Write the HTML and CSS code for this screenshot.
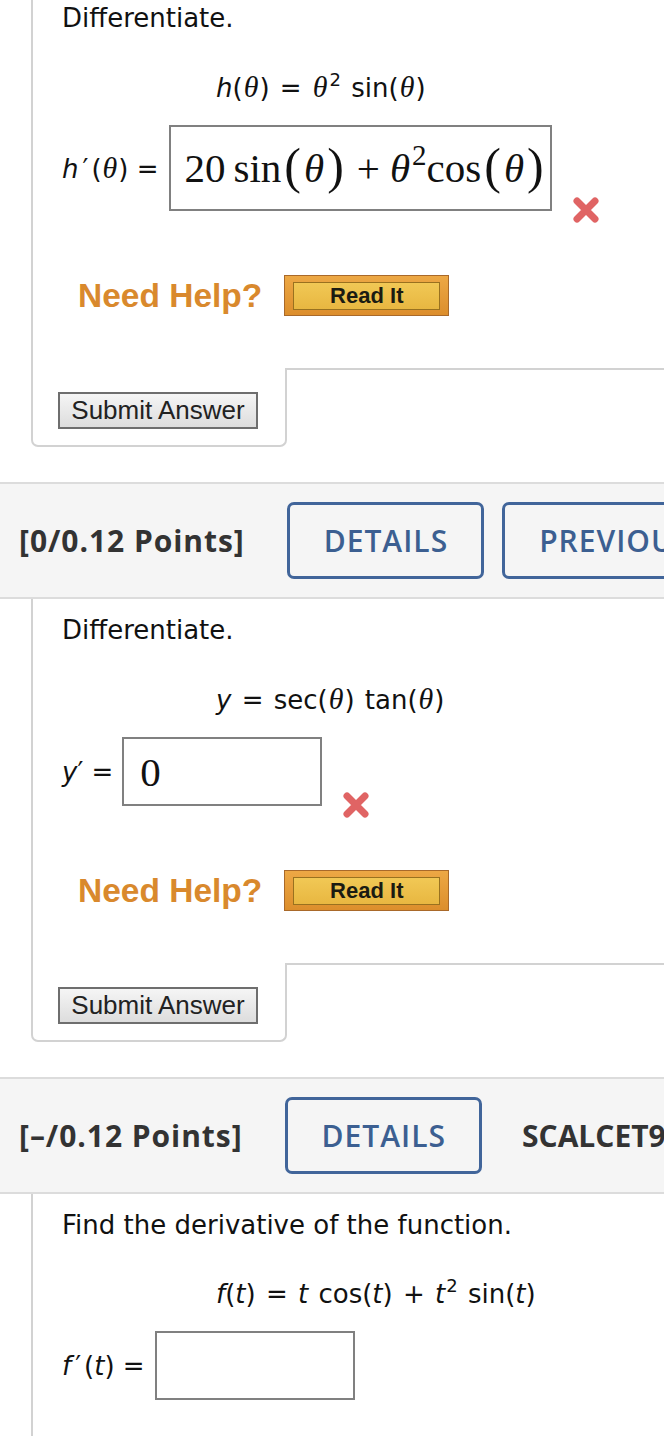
FILE: index.html
```html
<!DOCTYPE html>
<html>
<head>
<meta charset="utf-8">
<link rel="stylesheet" href="styles.css">
</head>
<body>
<div class="q q-first">
  <div class="q-body">
    <p class="prompt">Differentiate.</p>
    <p class="eq"><i>h</i>(<i class="th">θ</i>) = <i class="th">θ</i><sup>2</sup> sin(<i class="th">θ</i>)</p>
    <div class="ans-row">
      <span class="lbl"><i>h</i><span class="pr">′</span>(<i class="th">θ</i>) =</span>
      <div class="ans ans-wide"><span class="mj">20<span class="thin"></span>sin<span class="big">(</span><i>θ</i><span class="big">)</span><span class="op">+</span><i>θ</i><sup>2</sup>cos<span class="big">(</span><i>θ</i><span class="big">)</span></span></div>
      <svg class="xmark" width="30" height="28" viewBox="0 0 30 28"><path d="M6 5 L24 23 M24 5 L6 23" stroke="#e06464" stroke-width="7" stroke-linecap="round"/></svg>
    </div>
    <div class="help">
      <span class="need">Need Help?</span>
      <span class="readit"><span class="readit-in">Read It</span></span>
    </div>
  </div>
  <div class="tab"><button class="submit">Submit Answer</button></div>
</div>

<div class="band">
  <span class="pts">[0/0.12 Points]</span>
  <span class="btn">DETAILS</span>
  <span class="btn btn-next">PREVIOUS ANSWERS</span>
</div>

<div class="q">
  <div class="q-body">
    <p class="prompt">Differentiate.</p>
    <p class="eq"><i>y</i> = sec(<i class="th">θ</i>) tan(<i class="th">θ</i>)</p>
    <div class="ans-row">
      <span class="lbl lbl-y"><i>y</i>′ =</span>
      <div class="ans"><span class="mj">0</span></div>
      <svg class="xmark" width="30" height="28" viewBox="0 0 30 28"><path d="M6 5 L24 23 M24 5 L6 23" stroke="#e06464" stroke-width="7" stroke-linecap="round"/></svg>
    </div>
    <div class="help">
      <span class="need">Need Help?</span>
      <span class="readit"><span class="readit-in">Read It</span></span>
    </div>
  </div>
  <div class="tab"><button class="submit">Submit Answer</button></div>
</div>

<div class="band">
  <span class="pts">[–/0.12 Points]</span>
  <span class="btn">DETAILS</span>
  <span class="ref">SCALCET9 3.3.021.</span>
</div>

<div class="q q-last">
  <div class="q-body">
    <p class="prompt">Find the derivative of the function.</p>
    <p class="eq"><i>f</i>(<i>t</i>) = <i>t</i> cos(<i>t</i>) + <i>t</i><sup>2</sup> sin(<i>t</i>)</p>
    <div class="ans-row">
      <span class="lbl"><i>f</i><span class="pr">′</span>(<i>t</i>) =</span>
      <div class="ans ans-empty"></div>
    </div>
  </div>
</div>
</body>
</html>
```

FILE: styles.css
```css
html, body {
  margin: 0;
  padding: 0;
  background: #ffffff;
}
body {
  font-family: "DejaVu Sans", Verdana, sans-serif;
  color: #111111;
  overflow-x: hidden;
}
.q {
  margin-left: 31px;
}
.q-body {
  border-left: 2px solid #d2d2d2;
  border-bottom: 2px solid #d2d2d2;
  padding: 13px 0 52px 29px;
}
.q-first .q-body {
  padding-top: 0;
}
.q-last .q-body {
  border-bottom: none;
  padding-bottom: 60px;
}
.prompt {
  margin: 0;
  font-size: 26px;
  line-height: 36px;
}
.eq {
  margin: 33px 0 0 154px;
  font-size: 26px;
  line-height: 36px;
  white-space: nowrap;
  word-spacing: 2px;
}
.eq i, .lbl i {
  font-style: italic;
}
.th {
  font-family: "Liberation Serif", "Times New Roman", serif;
  font-size: 30px;
  padding: 0 1px;
}
.eq sup {
  font-size: 18px;
  line-height: 0;
  vertical-align: 11px;
  padding-left: 1px;
}
.ans-row {
  display: flex;
  align-items: center;
  margin-top: 19px;
}
.lbl {
  font-size: 26px;
  line-height: 36px;
  margin-right: 10px;
  white-space: nowrap;
}
.lbl-y {
  margin-right: 9px;
}
.pr {
  padding: 0 3px 0 4px;
}
.ans {
  box-sizing: border-box;
  width: 200px;
  min-height: 69px;
  border: 2px solid #808080;
  display: flex;
  align-items: center;
  padding: 0 16px;
  background: #ffffff;
}
.ans-wide {
  width: 383px;
  height: 86px;
  padding-left: 14px;
}
.mj {
  font-family: "Liberation Serif", "Times New Roman", serif;
  font-size: 41px;
  line-height: 50px;
  white-space: nowrap;
}
.mj i {
  font-style: italic;
}
.mj sup {
  font-size: 29px;
  line-height: 0;
  vertical-align: 17px;
  margin-left: 2px;
}
.thin {
  display: inline-block;
  width: 8px;
}
.big {
  font-size: 50px;
  line-height: 0;
  vertical-align: -1px;
  padding: 0 3px;
}
.op {
  padding: 0 10px;
}
.xmark {
  align-self: flex-end;
  margin: 0 0 -13px 19px;
}
.help {
  display: flex;
  align-items: center;
  margin-top: 64px;
  padding-left: 16px;
}
.need {
  font-family: "Liberation Sans", Arial, sans-serif;
  font-weight: bold;
  font-size: 33.5px;
  color: #d9892d;
  margin-right: 22px;
}
.readit {
  box-sizing: border-box;
  display: flex;
  width: 165px;
  height: 41px;
  padding: 6px 8px 5px;
  background: linear-gradient(#eda845, #dc8e2c);
  border: 1px solid #a9692a;
}
.readit-in {
  flex: 1;
  display: flex;
  align-items: center;
  justify-content: center;
  border: 1px solid #99711f;
  background: linear-gradient(#f1c855, #e8b741);
  font-family: "Liberation Sans", Arial, sans-serif;
  font-weight: bold;
  font-size: 22px;
  color: #1b1b12;
}
.tab {
  box-sizing: border-box;
  width: 256px;
  margin-top: -2px;
  border: 2px solid #d2d2d2;
  border-top: none;
  border-radius: 0 0 7px 7px;
  background: #ffffff;
  padding: 24px 0 16px 25px;
}
.submit {
  box-sizing: border-box;
  display: block;
  width: 200px;
  height: 37px;
  padding: 0;
  margin: 0;
  border: 2px solid #6e6e6e;
  background: linear-gradient(#f5f5f5, #dddddd);
  font-family: "Liberation Sans", Arial, sans-serif;
  font-size: 26px;
  color: #222222;
}
.band {
  margin-top: 35px;
  box-sizing: border-box;
  height: 117px;
  border-top: 2px solid #dcdcdc;
  border-bottom: 2px solid #dcdcdc;
  background: #f5f5f5;
  display: flex;
  align-items: center;
  padding-left: 19px;
  white-space: nowrap;
  overflow: hidden;
  font-family: "Open Sans", sans-serif;
}
.pts {
  font-weight: 700;
  font-size: 30px;
  color: #333333;
  letter-spacing: 0.95px;
}
.btn {
  flex: none;
  box-sizing: border-box;
  height: 77px;
  border: 3px solid #41659a;
  border-radius: 7px;
  padding: 0 33px 0 34px;
  display: flex;
  align-items: center;
  font-weight: 600;
  font-size: 30px;
  letter-spacing: 1px;
  color: #3c5f91;
  margin-left: 42px;
}
.btn-next {
  margin-left: 18px;
}
.ref {
  flex: none;
  margin-left: 40px;
  font-weight: 700;
  font-size: 30px;
  color: #333333;
}
```
